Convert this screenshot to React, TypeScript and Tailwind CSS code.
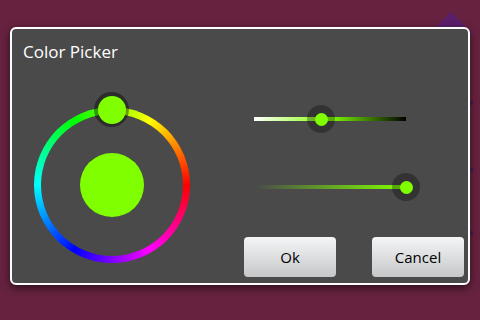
import React from "react";

function Knob({ size, inner, ring }: { size: number; inner: number; ring: string }) {
  return (
    <div
      className={`flex items-center justify-center rounded-full ${ring}`}
      style={{ width: size, height: size }}
    >
      <div className="rounded-full bg-[#80ff00]" style={{ width: inner, height: inner }} />
    </div>
  );
}

export default function App() {
  const font = { fontFamily: '"Open Sans", "Noto Sans", sans-serif' };
  return (
    <div className="relative w-[480px] h-[320px] overflow-hidden bg-[#66223f] pt-[27px] pl-[10px]" style={font}>
      {/* background decorations */}
      <div className="absolute left-[436px] top-[18px] w-[30px] h-[30px] rotate-45 bg-[#5b1f6a]" />
      <div className="absolute left-[470px] top-[101px] w-[3px] h-[4px] bg-[#4a1a50]" />
      <div className="absolute left-[470px] top-[168px] w-[3px] h-[4px] bg-[#4a1a50]" />
      <div className="absolute left-[470px] top-[231px] w-[3px] h-[4px] bg-[#4a1a50]" />

      <div className="relative w-[460px] h-[258px] rounded-[6px] border-2 border-white bg-[#4a4a4a] shadow-[0_3px_8px_rgba(0,0,0,0.55)] flex flex-col">
        <div className="pl-[11px] pt-[14px] text-[17px] leading-[17px] font-medium text-white">Color Picker</div>
        <div className="flex flex-row">
          {/* wheel */}
          <div className="ml-[22px] mt-[47px] relative w-[156px] h-[156px]">
            <div className="w-[156px] h-[156px] rounded-full bg-[conic-gradient(#80ff00,#ffff00_30deg,#ff0000_90deg,#ff00ff_150deg,#0000ff_210deg,#00ffff_270deg,#00ff00_330deg,#80ff00)] flex items-center justify-center">
              <div className="w-[142px] h-[142px] rounded-full bg-[#4a4a4a] flex items-center justify-center">
                <div className="w-[64px] h-[64px] rounded-full bg-[#80ff00]" />
              </div>
            </div>
            <div className="absolute left-[60px] top-[-15px]">
              <Knob size={35} inner={28} ring="bg-black/40" />
            </div>
          </div>
          {/* right column */}
          <div className="ml-[54px] mt-[45px] w-[220px] flex flex-col">
            <div className="relative h-[28px] flex items-center">
              <div className="ml-[10px] w-[152px] h-[4px] bg-[linear-gradient(to_right,#ffffff,#80ff00_50%,#000000)]" />
              <div className="absolute left-[63px] top-0">
                <Knob size={28} inner={13} ring="bg-black/30" />
              </div>
            </div>
            <div className="relative mt-[40px] h-[28px] flex items-center">
              <div className="ml-[11px] w-[150px] h-[4px] bg-[linear-gradient(to_right,rgba(128,255,0,0),#80ff00)]" />
              <div className="absolute left-[148px] top-0">
                <Knob size={28} inner={13} ring="bg-black/30" />
              </div>
            </div>
            <div className="mt-[36px] flex flex-row gap-[36px]">
              <button className="w-[92px] h-[40px] rounded-[4px] bg-[linear-gradient(to_bottom,#f4f5f7,#c6c7c9)] text-[15px] text-black flex items-center justify-center">
                Ok
              </button>
              <button className="w-[92px] h-[40px] rounded-[4px] bg-[linear-gradient(to_bottom,#f4f5f7,#c6c7c9)] text-[15px] text-black flex items-center justify-center">
                Cancel
              </button>
            </div>
          </div>
        </div>
      </div>
    </div>
  );
}
